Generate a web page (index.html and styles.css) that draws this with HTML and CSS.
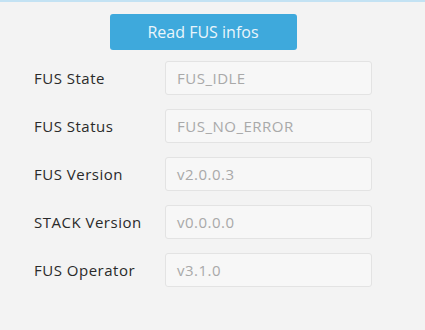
FILE: index.html
```html
<!DOCTYPE html>
<html>
<head>
<meta charset="utf-8">
<link rel="stylesheet" href="styles.css">
</head>
<body>
<div class="topline"></div>
<div class="panel">
  <div class="actions">
    <button class="read-btn">Read FUS infos</button>
  </div>
  <div class="rows">
    <div class="row"><span class="label">FUS State</span><div class="field">FUS_IDLE</div></div>
    <div class="row"><span class="label">FUS Status</span><div class="field">FUS_NO_ERROR</div></div>
    <div class="row"><span class="label">FUS Version</span><div class="field">v2.0.0.3</div></div>
    <div class="row"><span class="label">STACK Version</span><div class="field">v0.0.0.0</div></div>
    <div class="row"><span class="label">FUS Operator</span><div class="field">v3.1.0</div></div>
  </div>
</div>
</body>
</html>
```
FILE: styles.css
```css
html, body {
  margin: 0;
  padding: 0;
  background: #f3f3f3;
  font-family: "Open Sans", "Noto Sans", "DejaVu Sans", sans-serif;
}
.topline {
  height: 2px;
  background: #c3e2f3;
}
.panel {
  width: 338px;
  padding: 12px 0 0 34px;
}
.actions {
  display: flex;
  justify-content: center;
}
.read-btn {
  width: 187px;
  height: 36px;
  border: none;
  border-radius: 3px;
  background: #3ea9dc;
  color: #eaf5fb;
  font-family: inherit;
  font-size: 16px;
  padding: 0;
}
.rows {
  display: flex;
  flex-direction: column;
  gap: 14px;
  margin-top: 11px;
}
.row {
  display: flex;
  align-items: center;
}
.label {
  width: 131px;
  font-size: 15px;
  letter-spacing: 0.5px;
  color: #2a2a2a;
}
.field {
  box-sizing: border-box;
  width: 207px;
  height: 34px;
  border: 1px solid #e3e3e3;
  border-radius: 3px;
  background: #f7f7f7;
  color: #a9a9a9;
  font-size: 15px;
  letter-spacing: 0.5px;
  padding: 0 11px;
  display: flex;
  align-items: center;
}
```
